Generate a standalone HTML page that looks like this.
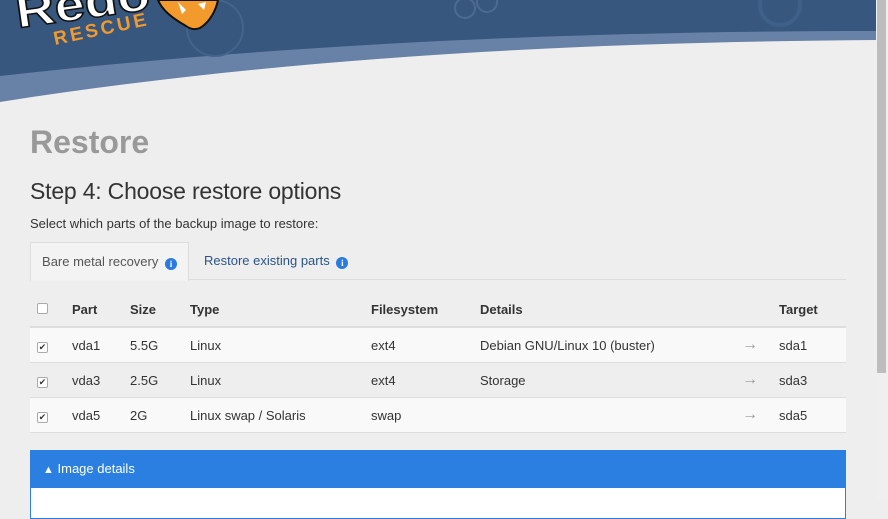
<!DOCTYPE html><html><head><style>
body{margin:0;width:888px;height:500px;overflow:hidden;background:#eee;font-family:"Liberation Sans",sans-serif;color:#333;position:relative}
.sb{position:absolute;left:876px;top:0;width:12px;height:500px;background:#efefef}
.sb div{position:absolute;left:1px;top:0;width:9px;height:373px;background:#bdbdbd}
h1{position:absolute;left:30px;top:124px;margin:0;font-size:32px;color:#999;font-weight:bold}
h2{position:absolute;left:30px;top:178px;margin:0;font-size:23px;font-weight:normal;color:#333;letter-spacing:-0.2px}
.p{position:absolute;left:30px;top:216px;font-size:13px}
.tabs{position:absolute;left:30px;top:242px;width:816px;height:37px;border-bottom:1px solid #ddd}
.tab{position:absolute;top:0;height:37px;line-height:38px;font-size:13px}
.t1{left:0;width:157px;border:1px solid #ddd;border-bottom:none;background:#f3f3f3;text-align:center;color:#555;height:38px}
.t2{left:174px;color:#2a5488}
.i{display:inline-block;width:12px;height:12px;border-radius:50%;background:#2a7ae2;color:#fff;font-size:9px;line-height:12px;text-align:center;font-weight:bold;vertical-align:-1px;margin-left:3px;font-family:"Liberation Serif",serif}
table{position:absolute;left:30px;top:293px;width:816px;border-collapse:collapse;font-size:13px;table-layout:fixed}
td,th{height:34px;padding:0;text-align:left}
th{font-weight:bold;border-bottom:2px solid #ddd;height:33px}
tr.a td{background:#f9f9f9;border-bottom:1px solid #ddd}
tr.b td{background:#eee;border-bottom:1px solid #ddd}
.cb{display:inline-block;width:9px;height:9px;border:1px solid #aaa;border-radius:2px;background:#fff;margin-left:7px;font-size:9px;line-height:9px;text-align:center;color:#333}
.ar{color:#999;font-size:16px;padding-left:12px}
.bar{position:absolute;left:30px;top:450px;width:816px;height:37px;background:#2a7fe0;color:#fff;font-size:13px;line-height:37px}
.body2{position:absolute;left:30px;top:487px;width:814px;height:30px;background:#fff;border:1px solid #2a7fe0}
</style></head><body>
<svg style="position:absolute;left:0;top:0" width="876" height="110">
<path d="M0 0H876V40C600 42 300 55 0 102Z" fill="#6881a7"/>
<path d="M0 0H876V31C600 31 300 42 0 76Z" fill="#37577e"/>
<circle cx="465" cy="8" r="10" fill="none" stroke="#4d6b92" stroke-width="2"/>
<circle cx="487" cy="2" r="10" fill="none" stroke="#4d6b92" stroke-width="2"/>
<circle cx="780" cy="5" r="20" fill="none" stroke="#3f6089" stroke-width="4"/>
<circle cx="215" cy="28" r="28" fill="none" stroke="#44648c" stroke-width="2"/>
<text x="18" y="28" font-family="Liberation Sans" font-weight="bold" font-size="46" fill="#fff" stroke="#111" stroke-width="1.5" transform="rotate(-8 18 28)" textLength="135" lengthAdjust="spacingAndGlyphs">Redo</text>
<text x="55" y="45" font-family="Liberation Sans" font-weight="bold" font-size="19" fill="#f29a2b" letter-spacing="3" transform="rotate(-12 55 45)">RESCUE</text>
<path d="M158 0L218 0C216 10 210 22 200 28C195 30 190 29 186 26C172 18 162 10 158 0Z" fill="#f29a2b" stroke="#111" stroke-width="2"/>
<path d="M178 2L186 10L182 14Z M198 4L206 2L204 10Z" fill="#fff"/>
</svg>
<div class="sb"><div></div></div>
<h1>Restore</h1>
<h2>Step 4: Choose restore options</h2>
<div class="p">Select which parts of the backup image to restore:</div>
<div class="tabs"><div class="tab t1">Bare metal recovery <span class="i">i</span></div><div class="tab t2">Restore existing parts <span class="i">i</span></div></div>
<table>
<tr><th style="width:42px"><span class="cb"></span></th><th style="width:58px">Part</th><th style="width:60px">Size</th><th style="width:181px">Type</th><th style="width:109px">Filesystem</th><th style="width:250px">Details</th><th style="width:49px"></th><th>Target</th></tr>
<tr class="a"><td><span class="cb">✔</span></td><td>vda1</td><td>5.5G</td><td>Linux</td><td>ext4</td><td>Debian GNU/Linux 10 (buster)</td><td class="ar">→</td><td>sda1</td></tr>
<tr class="b"><td><span class="cb">✔</span></td><td>vda3</td><td>2.5G</td><td>Linux</td><td>ext4</td><td>Storage</td><td class="ar">→</td><td>sda3</td></tr>
<tr class="a"><td><span class="cb">✔</span></td><td>vda5</td><td>2G</td><td>Linux swap / Solaris</td><td>swap</td><td></td><td class="ar">→</td><td>sda5</td></tr>
</table>
<div class="bar"><span style="margin-left:13px;font-size:11px">&#9650;</span> Image details</div>
<div class="body2"></div>
</body></html>
